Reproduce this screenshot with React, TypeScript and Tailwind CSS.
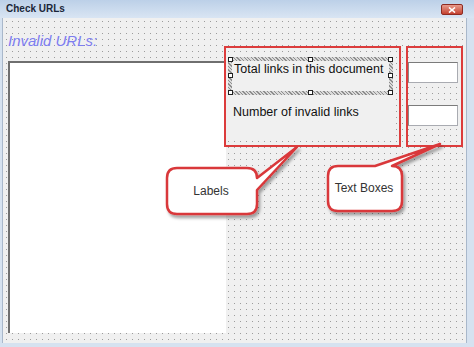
import React from "react";

const dots =
  "bg-[#9c9c9c] bg-[linear-gradient(90deg,transparent_1px,#f0f0f0_1px),linear-gradient(transparent_1px,#f0f0f0_1px)] bg-[length:6px_6px] bg-size-[6px_6px] bg-[position:3px_3px]";

function Handle({ className }: { className: string }) {
  return <span className={`absolute w-[5px] h-[5px] bg-white border border-[#222] ${className}`} />;
}

function Callouts() {
  return (
    <svg className="absolute left-0 top-0 pointer-events-none" width={474} height={347} viewBox="0 0 474 347">
      <defs>
        <filter id="sh" x="-20%" y="-20%" width="140%" height="150%">
          <feDropShadow dx="2" dy="3" stdDeviation="1.5" floodColor="#000" floodOpacity="0.35" />
        </filter>
      </defs>
      <path
        d="M177,168 H247 Q257,168 257,178 L297,147 L257,190 V204 Q257,214 247,214 H177 Q167,214 167,204 V178 Q167,168 177,168 Z"
        fill="#fff"
        stroke="#d9383a"
        strokeWidth={2.5}
        strokeLinejoin="round"
        filter="url(#sh)"
      />
      <path
        d="M338,166 H375 L440,144 L392,166 Q402,166 402,176 V201 Q402,211 392,211 H338 Q328,211 328,201 V176 Q328,166 338,166 Z"
        fill="#fff"
        stroke="#d9383a"
        strokeWidth={2.5}
        strokeLinejoin="round"
        filter="url(#sh)"
      />
      <text x={211} y={195} textAnchor="middle" fontFamily="'Liberation Sans', Arial, sans-serif" fontSize={12} fill="#333">
        Labels
      </text>
      <text x={364} y={192} textAnchor="middle" fontFamily="'Liberation Sans', Arial, sans-serif" fontSize={12} fill="#333">
        Text Boxes
      </text>
    </svg>
  );
}

export default function App() {
  return (
    <div className="relative w-[474px] h-[347px] bg-[#d6e2f0] overflow-hidden font-['Liberation_Sans',Arial,sans-serif]">
      {/* title bar */}
      <div className="h-[18px] flex items-start justify-between bg-gradient-to-b from-[#bcd0e8] to-[#d9e5f3]">
        <span className="pl-[6px] pt-[3px] text-[10px] leading-[12px] font-semibold text-[#1b2638]">Check URLs</span>
        <button className="mt-[4px] mr-[11px] w-[22px] h-[11px] rounded-[2px] border border-[#8e2b22] bg-gradient-to-b from-[#e79a8c] to-[#c4402f] grid place-items-center">
          <svg width="8" height="6" viewBox="0 0 8 6">
            <path d="M1,0.5 L7,5.5 M7,0.5 L1,5.5" stroke="#fff" strokeWidth={1.6} />
          </svg>
        </button>
      </div>

      {/* design surface */}
      <div className={`ml-[2px] w-[465px] h-[325px] border-l border-r border-[#a9b8cb] flex ${dots}`}>
        <div className="ml-[5px] w-[218px] flex flex-col">
          <div className="h-[43px] pt-[11px]">
            <span className="italic text-[15px] leading-[18px] text-[#7d7df0]">Invalid URLs:</span>
          </div>
          <div className="h-[272px] bg-white border-t-2 border-l-2 border-[#6f6f6f]" />
        </div>

        <div className="ml-[2px] w-[165px] flex flex-col pt-[39px]">
          <div className="relative h-[38px] p-[4px] bg-[repeating-linear-gradient(45deg,#8e8e8e_0_1px,#dadada_1px_2.5px)]">
            <div className="h-full bg-[#f0f0f0] pl-[2px] pt-[1px] text-[12.5px] leading-[15px] text-[#111]">
              Total links in this document
            </div>
            <Handle className="left-0 top-0" />
            <Handle className="left-[80px] top-0" />
            <Handle className="right-0 top-0" />
            <Handle className="left-0 top-[16px]" />
            <Handle className="right-0 top-[16px]" />
            <Handle className="left-0 bottom-0" />
            <Handle className="left-[80px] bottom-0" />
            <Handle className="right-0 bottom-0" />
          </div>
          <div className="mt-[3px] h-[39px] bg-[#f0f0f0] pl-[5px] pt-[7px] text-[12.5px] leading-[15px] text-[#111]">
            Number of invalid links
          </div>
        </div>

        <div className="ml-[15px] w-[50px] flex flex-col pt-[44px]">
          <div className="h-[21px] bg-white border border-[#a9abb1] border-t-[#7b7b7b] border-l-[#8a8a8a]" />
          <div className="mt-[22px] h-[21px] bg-white border border-[#a9abb1] border-t-[#7b7b7b] border-l-[#8a8a8a]" />
        </div>
      </div>

      {/* annotation frames */}
      <div className="absolute left-[224px] top-[46px] w-[177px] h-[101px] border-2 border-[#dc3c3c]" />
      <div className="absolute left-[406px] top-[46px] w-[57px] h-[101px] border-2 border-[#dc3c3c]" />

      <Callouts />
    </div>
  );
}
